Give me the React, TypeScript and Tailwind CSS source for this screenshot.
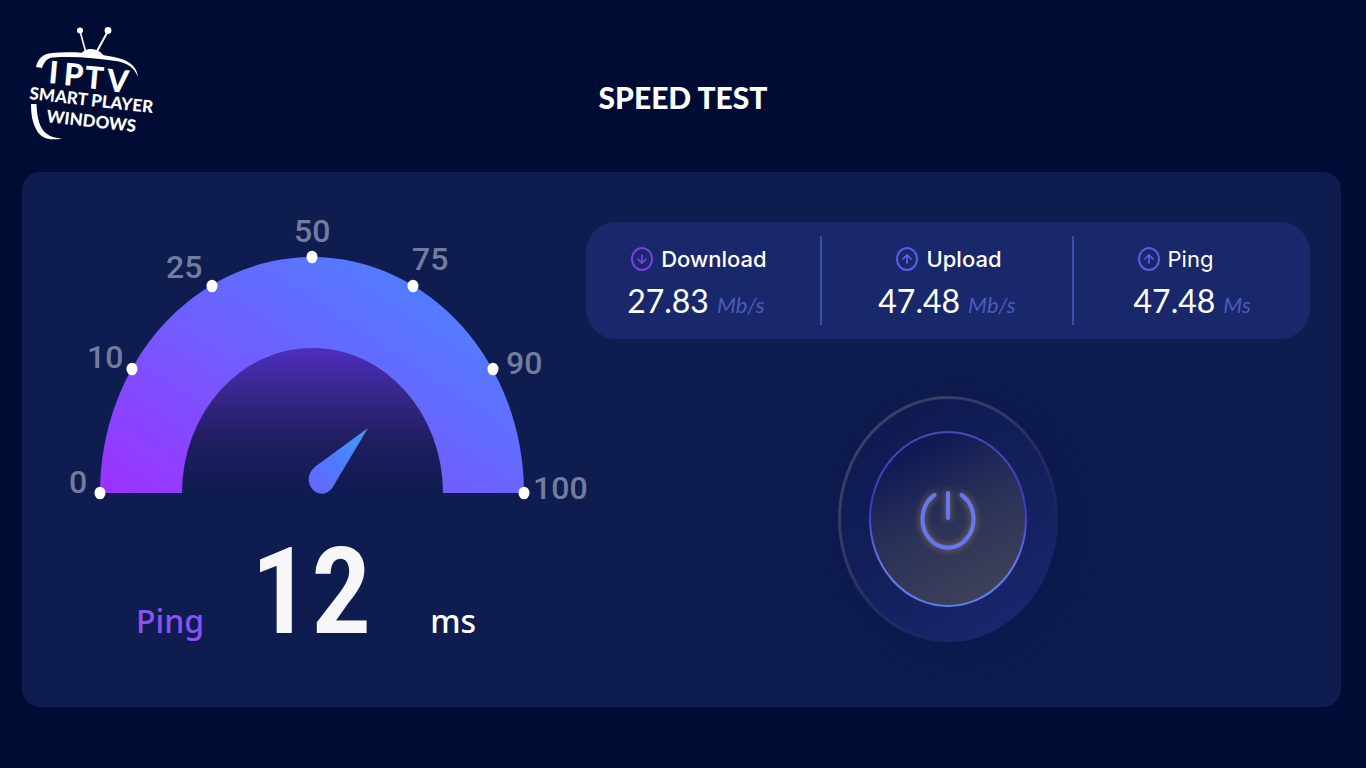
import { ArrowDown, ArrowUp } from "lucide-react";
import clsx from "clsx";

type Stat = {
  id: string;
  label: string;
  value: string;
  unit: string;
  direction: "down" | "up";
  ring: string;
  labelWeight: string;
  align: string;
};

const STATS: Stat[] = [
  { id: "download", label: "Download", value: "27.83", unit: "Mb/s", direction: "down", ring: "text-[#7a3fe0]", labelWeight: "font-medium", align: "items-start pr-3" },
  { id: "upload", label: "Upload", value: "47.48", unit: "Mb/s", direction: "up", ring: "text-[#5a5fe6]", labelWeight: "font-medium", align: "items-center" },
  { id: "ping", label: "Ping", value: "47.48", unit: "Ms", direction: "up", ring: "text-[#5560e0]", labelWeight: "font-normal", align: "items-start" }
];

const TICKS = [
  { label: "0", x: 7, y: 281, dotX: 38, dotY: 281 },
  { label: "10", x: 25, y: 156, dotX: 70, dotY: 157 },
  { label: "25", x: 104, y: 66, dotX: 150, dotY: 74 },
  { label: "50", x: 232, y: 30, dotX: 250, dotY: 45 },
  { label: "75", x: 350, y: 58, dotX: 351, dotY: 74 },
  { label: "90", x: 444, y: 162, dotX: 431, dotY: 157 },
  { label: "100", x: 471, y: 287, dotX: 462, dotY: 281 }
];

function Logo() {
  return (
    <svg viewBox="0 0 130 122" className="h-[122px] w-[130px] overflow-visible" fill="#ffffff" role="img" aria-label="IPTV Smart Player Windows">
      <g stroke="#ffffff" strokeLinecap="round">
        <path d="M54 9 60 31" strokeWidth="1.6" />
        <path d="M82 9 70 31" strokeWidth="2" />
      </g>
      <circle cx="54" cy="8.5" r="3" />
      <circle cx="82" cy="8.5" r="3.4" />
      <path d="M54 34C57 25 73 24 79 36Z" />
      <path d="M10 45C12 36 17 32 26 31 50 29 74 32 92 36 104 39 111 45 112 55 108 45 101 41 90 39 70 36 48 34 27 35.500 21 36 18 40 16 46Z" />
      <path d="M5 82H10.500C11 97 14 107 21 112 25 115 30 116 36 116.500 23 119 14 116 10 107 6 99 5 91 5 82Z" />
      <g fontFamily="Lato, sans-serif" fontWeight="900">
        <text x="22 37 58 80" y="61 63 66 69" rotate="5 5 5 5" fontSize="31">IPTV</text>
        <text transform="translate(3 77) rotate(6.500)" fontSize="17">SMART PLAYER</text>
        <text transform="translate(20 100) rotate(6.500)" fontSize="17">WINDOWS</text>
      </g>
    </svg>
  );
}

function Gauge() {
  return (
    <svg viewBox="0 0 524 290" className="w-full overflow-visible" role="img" aria-label="Ping gauge">
      <defs>
        <linearGradient id="band" gradientUnits="userSpaceOnUse" x1="60" y1="285" x2="247" y2="0">
          <stop offset="0" stopColor="#9b32ff" />
          <stop offset="0.5" stopColor="#735bff" />
          <stop offset="1" stopColor="#527cff" />
        </linearGradient>
        <linearGradient id="well" x1="0" y1="0" x2="0" y2="1">
          <stop offset="0" stopColor="#4e2dc0" />
          <stop offset="0.3" stopColor="#38278c" />
          <stop offset="0.65" stopColor="#1f1d5f" />
          <stop offset="1" stopColor="#0e1c50" />
        </linearGradient>
        <linearGradient id="needle" x1="0" y1="1" x2="1" y2="0">
          <stop offset="0" stopColor="#6b63ff" />
          <stop offset="0.5" stopColor="#4c7cff" />
          <stop offset="1" stopColor="#3fa0ee" />
        </linearGradient>
      </defs>
      <path d="M120 281A130.500 145 0 0 1 381 281Z" fill="url(#well)" />
      <path d="M38 281A212 236 0 0 1 462 281H381A130.500 145 0 0 0 120 281Z" fill="url(#band)" />
      <path d="M306 216 254 254C248 259 246 264 247 270 250 284 266 286 272 273Z" fill="url(#needle)" />
      {TICKS.map((tick) => (
        <g key={tick.label}>
          <ellipse cx={tick.dotX} cy={tick.dotY} rx="5.500" ry="6.300" fill="#ffffff" />
          <text x={tick.x} y={tick.y} fontSize="32" fontWeight="500" fontFamily="Roboto, sans-serif" fill="#727c9f">
            {tick.label}
          </text>
        </g>
      ))}
    </svg>
  );
}

function StatCell({ stat }: { stat: Stat }) {
  const Arrow = stat.direction === "down" ? ArrowDown : ArrowUp;
  return (
    <div className="flex justify-center">
      <dl className={clsx("flex flex-col justify-center gap-2 pt-1", stat.align)}>
        <dt className="flex items-center gap-2 pl-1">
          <span className={clsx("flex h-6 w-[22px] items-center justify-center rounded-[50%] border-2", stat.ring)}>
            <Arrow className="h-[14px] w-[14px]" strokeWidth={3} />
          </span>
          <span className={clsx("font-[Inter,sans-serif] text-[22px] leading-7 text-white", stat.labelWeight)}>{stat.label}</span>
        </dt>
        <dd className="flex items-baseline gap-2">
          <span className="text-[32px] leading-10 text-white">{stat.value}</span>
          <span className="text-[22px] leading-7 text-[#4a5cb8] italic">{stat.unit}</span>
        </dd>
      </dl>
    </div>
  );
}

function PowerButton() {
  return (
    <button
      type="button"
      aria-label="Start speed test"
      className="h-[246px] w-[220px] rounded-[50%] shadow-[12px_10px_48px_6px_rgba(8,18,62,0.3)]"
    >
      <svg viewBox="0 0 220 246" className="h-full w-full" fill="none">
        <defs>
          <linearGradient id="dish" x1="0.2" y1="0" x2="0.8" y2="1">
            <stop offset="0" stopColor="#0e1a4f" />
            <stop offset="0.5" stopColor="#121f5a" />
            <stop offset="1" stopColor="#19286f" />
          </linearGradient>
          <linearGradient id="rim" x1="0.2" y1="0" x2="0.8" y2="0.7">
            <stop offset="0" stopColor="#3a4268" />
            <stop offset="0.45" stopColor="#303963" />
            <stop offset="1" stopColor="#303963" stopOpacity="0" />
          </linearGradient>
          <linearGradient id="face" x1="0.3" y1="0" x2="0.75" y2="1">
            <stop offset="0.1" stopColor="#101b55" />
            <stop offset="0.5" stopColor="#2b3258" />
            <stop offset="1" stopColor="#414259" />
          </linearGradient>
          <linearGradient id="faceRim" x1="0" y1="0" x2="0" y2="1">
            <stop offset="0" stopColor="#464bb0" />
            <stop offset="0.45" stopColor="#4136c8" />
            <stop offset="0.75" stopColor="#7073e8" />
            <stop offset="1" stopColor="#5680ee" />
          </linearGradient>
          <filter id="glow" x="-50%" y="-50%" width="200%" height="200%">
            <feGaussianBlur stdDeviation="3" />
          </filter>
        </defs>
        <ellipse cx="110" cy="123" rx="110" ry="123" fill="url(#dish)" />
        <ellipse cx="110" cy="123" rx="108.500" ry="121.500" stroke="url(#rim)" strokeWidth="3" />
        <ellipse cx="110" cy="123" rx="78" ry="87" fill="url(#face)" stroke="url(#faceRim)" strokeWidth="2" />
        <g strokeLinecap="round">
          <g stroke="#8a7355" strokeWidth="6" opacity="0.7" filter="url(#glow)">
            <path d="M96.500 99A25.500 28.500 0 1 0 123.500 99" />
            <path d="M110 97V122" />
          </g>
          <g stroke="#6478f5" strokeWidth="4">
            <path d="M96.500 99A25.500 28.500 0 1 0 123.500 99" />
            <path d="M110 97V122" />
          </g>
        </g>
      </svg>
    </button>
  );
}

export default function App() {
  return (
    <div className="flex min-h-screen flex-col bg-[#000c34] font-[Lato,sans-serif]">
      <header className="grid grid-cols-[1fr_auto_1fr] items-center px-[26px] pt-[22px] pb-7">
        <Logo />
        <h1 className="pt-7 text-[30px] leading-10 font-black text-white">SPEED TEST</h1>
      </header>

      <main className="mr-[25px] mb-[61px] ml-[22px] grid flex-1 grid-cols-1 rounded-[18px] bg-[#0e1c50] pt-10 pr-[31px] pl-10 lg:grid-cols-[524fr_724fr]">
        <section>
          <Gauge />
          <div className="flex items-baseline justify-between pt-[30px] pr-[110px] pl-[74px]">
            <span className="font-['Noto_Sans',sans-serif] text-[32px] leading-10 font-medium text-[#8a52f5]">Ping</span>
            <span className="pr-3 font-['Roboto_Condensed',Roboto,sans-serif] text-[120px] leading-[120px] font-semibold text-[#f7f7fa]">12</span>
            <span className="font-['Noto_Sans',sans-serif] text-[32px] leading-10 font-medium text-white">ms</span>
          </div>
        </section>

        <section className="flex flex-col items-center gap-[57px] pt-[10px]">
          <div className="grid h-[117px] w-full grid-cols-[236fr_253fr_236fr] divide-x-2 divide-[#3d50a8] rounded-[30px] bg-[#19276b] py-[14px]">
            {STATS.map((stat) => (
              <StatCell key={stat.id} stat={stat} />
            ))}
          </div>
          <PowerButton />
        </section>
      </main>
    </div>
  );
}
